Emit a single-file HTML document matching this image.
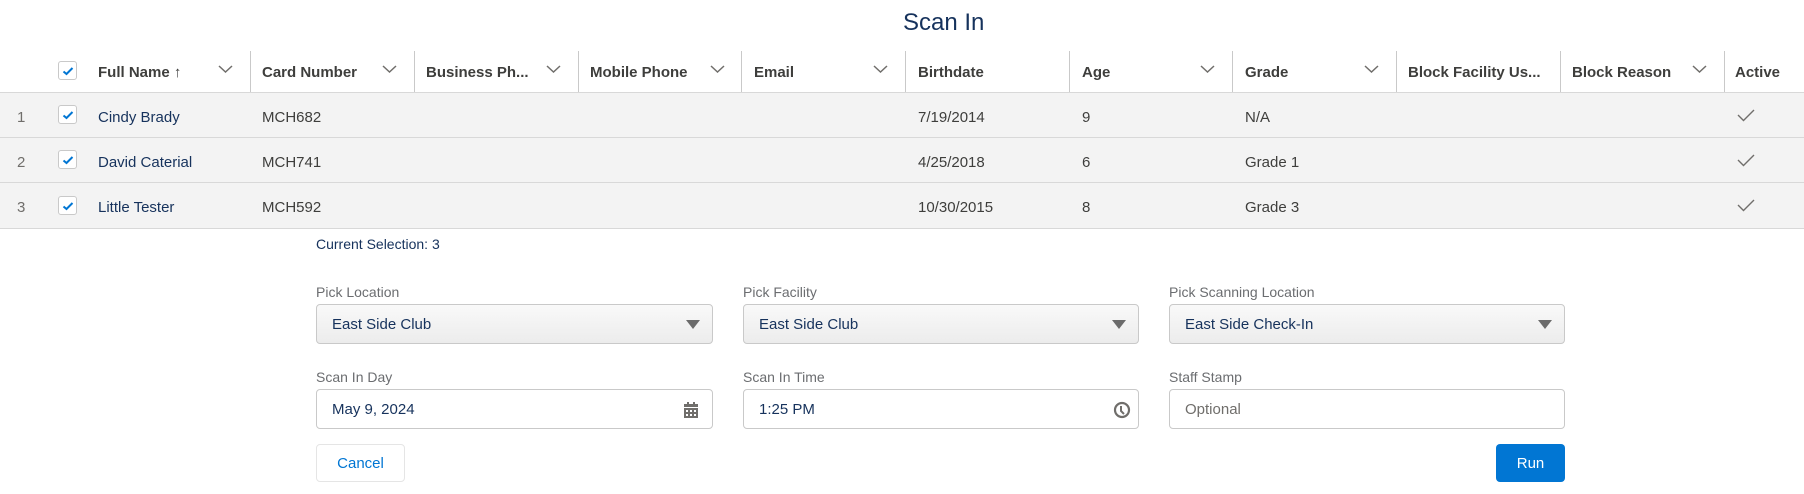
<!DOCTYPE html>
<html><head><meta charset="utf-8"><style>
*{box-sizing:border-box;margin:0;padding:0}
body{width:1804px;height:494px;background:#fff;position:relative;overflow:hidden;font-family:"Liberation Sans",sans-serif;color:#181818}
.a{position:absolute}
.title{left:903px;top:9px;font-size:24px;color:#16325c}
.hdr{font-size:15px;font-weight:bold;color:#3e3e3c;top:64px;white-space:nowrap}
.sep{width:1px;background:#c9c9c9;top:51px;height:41px}
.chev{top:64px}
.row{left:0;width:1804px;height:46px;background:#f3f3f3;border-bottom:1px solid #d8d8d8}
.cell{font-size:15px;color:#3e3e3c;white-space:nowrap}
.name{color:#16325c}
.cb{width:19px;height:19px;border:1px solid #c9c9c9;border-radius:3px;background:#fff}
.cb svg{position:absolute;left:3px;top:4px}
.num{font-size:15px;color:#706e6b}
.lbl{font-size:14px;color:#6b6d70}
.sel{height:40px;border:1px solid #c9c9c9;border-radius:4px;background:linear-gradient(#f9f9f9,#ececec);font-size:15px;color:#16325c;padding:11px 15px}
.inp{height:40px;border:1px solid #c9c9c9;border-radius:4px;background:#fff;font-size:15px;color:#16325c;padding:11px 15px}
.tri{position:absolute;right:12px;top:15px;width:0;height:0;border-left:7px solid transparent;border-right:7px solid transparent;border-top:9px solid #6b6b6b}
</style></head><body>
<div class="a title">Scan In</div>

<div class="a" style="left:0;top:92px;width:1804px;height:1px;background:#d8d8d8"></div>
<div class="a row" style="top:93px;height:45px"></div>
<div class="a row" style="top:138px;height:45px"></div>
<div class="a row" style="top:183px;height:46px"></div>

<div class="a cb" style="left:58px;top:61px"><svg width="12" height="10" viewBox="0 0 12 10"><path d="M1.5 5.5 L4.5 8 L10.5 2" fill="none" stroke="#0176d3" stroke-width="2"/></svg></div>
<div class="a hdr" style="left:98px">Full Name ↑</div>
<div class="a hdr" style="left:262px">Card Number</div>
<div class="a hdr" style="left:426px">Business Ph...</div>
<div class="a hdr" style="left:590px">Mobile Phone</div>
<div class="a hdr" style="left:754px">Email</div>
<div class="a hdr" style="left:918px">Birthdate</div>
<div class="a hdr" style="left:1082px">Age</div>
<div class="a hdr" style="left:1245px">Grade</div>
<div class="a hdr" style="left:1408px">Block Facility Us...</div>
<div class="a hdr" style="left:1572px">Block Reason</div>
<div class="a hdr" style="left:1735px">Active</div>

<div class="a sep" style="left:250px"></div>
<div class="a sep" style="left:414px"></div>
<div class="a sep" style="left:578px"></div>
<div class="a sep" style="left:741px"></div>
<div class="a sep" style="left:905px"></div>
<div class="a sep" style="left:1069px"></div>
<div class="a sep" style="left:1232px"></div>
<div class="a sep" style="left:1396px"></div>
<div class="a sep" style="left:1560px"></div>
<div class="a sep" style="left:1724px"></div>

<svg class="a chev" style="left:218px" width="15" height="10" viewBox="0 0 15 10"><path d="M1 2 L7.5 8 L14 2" fill="none" stroke="#706e6b" stroke-width="1.5"/></svg>
<svg class="a chev" style="left:382px" width="15" height="10" viewBox="0 0 15 10"><path d="M1 2 L7.5 8 L14 2" fill="none" stroke="#706e6b" stroke-width="1.5"/></svg>
<svg class="a chev" style="left:546px" width="15" height="10" viewBox="0 0 15 10"><path d="M1 2 L7.5 8 L14 2" fill="none" stroke="#706e6b" stroke-width="1.5"/></svg>
<svg class="a chev" style="left:710px" width="15" height="10" viewBox="0 0 15 10"><path d="M1 2 L7.5 8 L14 2" fill="none" stroke="#706e6b" stroke-width="1.5"/></svg>
<svg class="a chev" style="left:873px" width="15" height="10" viewBox="0 0 15 10"><path d="M1 2 L7.5 8 L14 2" fill="none" stroke="#706e6b" stroke-width="1.5"/></svg>
<svg class="a chev" style="left:1200px" width="15" height="10" viewBox="0 0 15 10"><path d="M1 2 L7.5 8 L14 2" fill="none" stroke="#706e6b" stroke-width="1.5"/></svg>
<svg class="a chev" style="left:1364px" width="15" height="10" viewBox="0 0 15 10"><path d="M1 2 L7.5 8 L14 2" fill="none" stroke="#706e6b" stroke-width="1.5"/></svg>
<svg class="a chev" style="left:1692px" width="15" height="10" viewBox="0 0 15 10"><path d="M1 2 L7.5 8 L14 2" fill="none" stroke="#706e6b" stroke-width="1.5"/></svg>

<div class="a num" style="left:17px;top:109px">1</div>
<div class="a cb" style="left:58px;top:105px"><svg width="12" height="10" viewBox="0 0 12 10"><path d="M1.5 5.5 L4.5 8 L10.5 2" fill="none" stroke="#0176d3" stroke-width="2"/></svg></div>
<div class="a cell name" style="left:98px;top:109px">Cindy Brady</div>
<div class="a cell" style="left:262px;top:109px">MCH682</div>
<div class="a cell" style="left:918px;top:109px">7/19/2014</div>
<div class="a cell" style="left:1082px;top:109px">9</div>
<div class="a cell" style="left:1245px;top:109px">N/A</div>
<svg class="a" style="left:1737px;top:108px" width="18" height="14" viewBox="0 0 18 14"><path d="M1 7 L6.5 12.5 L17 2" fill="none" stroke="#706e6b" stroke-width="1.4"/></svg>

<div class="a num" style="left:17px;top:154px">2</div>
<div class="a cb" style="left:58px;top:150px"><svg width="12" height="10" viewBox="0 0 12 10"><path d="M1.5 5.5 L4.5 8 L10.5 2" fill="none" stroke="#0176d3" stroke-width="2"/></svg></div>
<div class="a cell name" style="left:98px;top:154px">David Caterial</div>
<div class="a cell" style="left:262px;top:154px">MCH741</div>
<div class="a cell" style="left:918px;top:154px">4/25/2018</div>
<div class="a cell" style="left:1082px;top:154px">6</div>
<div class="a cell" style="left:1245px;top:154px">Grade 1</div>
<svg class="a" style="left:1737px;top:153px" width="18" height="14" viewBox="0 0 18 14"><path d="M1 7 L6.5 12.5 L17 2" fill="none" stroke="#706e6b" stroke-width="1.4"/></svg>

<div class="a num" style="left:17px;top:199px">3</div>
<div class="a cb" style="left:58px;top:196px"><svg width="12" height="10" viewBox="0 0 12 10"><path d="M1.5 5.5 L4.5 8 L10.5 2" fill="none" stroke="#0176d3" stroke-width="2"/></svg></div>
<div class="a cell name" style="left:98px;top:199px">Little Tester</div>
<div class="a cell" style="left:262px;top:199px">MCH592</div>
<div class="a cell" style="left:918px;top:199px">10/30/2015</div>
<div class="a cell" style="left:1082px;top:199px">8</div>
<div class="a cell" style="left:1245px;top:199px">Grade 3</div>
<svg class="a" style="left:1737px;top:198px" width="18" height="14" viewBox="0 0 18 14"><path d="M1 7 L6.5 12.5 L17 2" fill="none" stroke="#706e6b" stroke-width="1.4"/></svg>

<div class="a" style="left:316px;top:236px;font-size:14px;color:#16325c">Current Selection: 3</div>

<div class="a lbl" style="left:316px;top:284px">Pick Location</div>
<div class="a lbl" style="left:743px;top:284px">Pick Facility</div>
<div class="a lbl" style="left:1169px;top:284px">Pick Scanning Location</div>
<div class="a sel" style="left:316px;top:304px;width:397px">East Side Club<span class="tri"></span></div>
<div class="a sel" style="left:743px;top:304px;width:396px">East Side Club<span class="tri"></span></div>
<div class="a sel" style="left:1169px;top:304px;width:396px">East Side Check-In<span class="tri"></span></div>

<div class="a lbl" style="left:316px;top:369px">Scan In Day</div>
<div class="a lbl" style="left:743px;top:369px">Scan In Time</div>
<div class="a lbl" style="left:1169px;top:369px">Staff Stamp</div>
<div class="a inp" style="left:316px;top:389px;width:397px">May 9, 2024
<svg class="a" style="right:14px;top:12px" width="14" height="16" viewBox="0 0 14 16"><rect x="3" y="0" width="2" height="3" fill="#706e6b"/><rect x="9" y="0" width="2" height="3" fill="#706e6b"/><rect x="0" y="2" width="14" height="3" fill="#706e6b"/><rect x="0" y="6" width="14" height="10" fill="#706e6b"/><g fill="#fff"><rect x="2" y="8" width="2" height="2"/><rect x="6" y="8" width="2" height="2"/><rect x="10" y="8" width="2" height="2"/><rect x="2" y="12" width="2" height="2"/><rect x="6" y="12" width="2" height="2"/><rect x="10" y="12" width="2" height="2"/></g></svg></div>
<div class="a inp" style="left:743px;top:389px;width:396px">1:25 PM
<svg class="a" style="right:7px;top:11px" width="18" height="18" viewBox="0 0 18 18"><circle cx="9" cy="9" r="7" fill="none" stroke="#706e6b" stroke-width="2.2"/><path d="M8 5 L8 10 L11 13" fill="none" stroke="#706e6b" stroke-width="2"/></svg></div>
<div class="a inp" style="left:1169px;top:389px;width:396px;color:#706e6b">Optional</div>

<div class="a" style="left:316px;top:444px;width:89px;height:38px;border:1px solid #e5e5e5;border-radius:4px;background:#fff;color:#0176d3;font-size:15px;text-align:center;line-height:38px">Cancel</div>
<div class="a" style="left:1496px;top:444px;width:69px;height:38px;border-radius:4px;background:#0176d3;color:#fff;font-size:15px;text-align:center;line-height:39px">Run</div>
</body></html>
